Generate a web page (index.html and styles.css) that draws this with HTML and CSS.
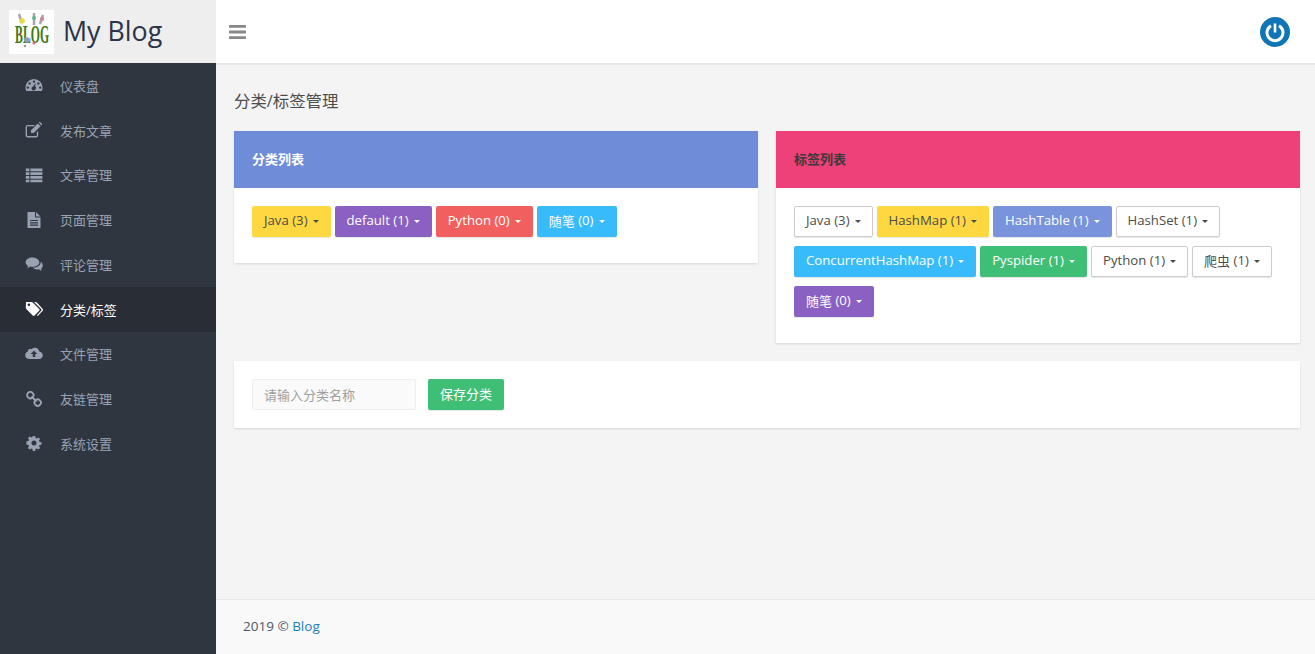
FILE: index.html
```html
<!DOCTYPE html>
<html lang="zh-CN">
<head>
<meta charset="utf-8">
<title>My Blog</title>
<link rel="stylesheet" href="styles.css">
</head>
<body>
<div class="app">
  <aside class="sidebar">
    <div class="brand">
      <svg class="logo" viewBox="0 0 45 44">
        <rect width="45" height="44" fill="#fff"/>
        <path d="M10 4l3 9M25 3v12M34 5l-3 9" stroke="#a5a5b0" stroke-width="2.500" fill="none"/>
        <circle cx="13" cy="11" r="2.800" fill="#e8dc4a"/><circle cx="25" cy="8" r="2" fill="#5fb98a"/><circle cx="33" cy="9" r="2.200" fill="#c98a9a"/>
        <g transform="scale(.47 1)"><text class="logo-text" x="13" y="33">BLOG</text></g>
        <circle cx="18" cy="30" r="2.800" fill="#8aa0c8"/><circle cx="25" cy="33" r="1.600" fill="#d77"/><circle cx="11" cy="24" r="1.100" fill="#e33"/><circle cx="16" cy="36" r="1.300" fill="#a99"/>
      </svg>
      <span class="brand-name">My Blog</span>
    </div>
    <nav class="menu">
      <a class="item"><svg class="ico" viewBox="0 0 18 16"><path fill-rule="evenodd" d="M9 2a8.600 8.600 0 0 1 8.600 8.600c0 1.300-.3 2.400-.8 3.400H1.200a8 8 0 0 1-.8-3.400A8.600 8.600 0 0 1 9 2zM9 3.400a1.200 1.200 0 1 0 0 2.400 1.200 1.200 0 0 0 0-2.400zM4.600 5.200a1.200 1.200 0 1 0 0 2.400 1.200 1.200 0 0 0 0-2.400zM13.400 5.200a1.200 1.200 0 1 0 0 2.400 1.200 1.200 0 0 0 0-2.400zM2.800 9.400a1.200 1.200 0 1 0 0 2.400 1.200 1.200 0 0 0 0-2.400zM15.200 9.400a1.200 1.200 0 1 0 0 2.400 1.200 1.200 0 0 0 0-2.400zM10.800 6 8.100 9.500a2 2 0 1 0 2 3.200 2 2 0 0 0 .1-3.100z"/></svg><span>仪表盘</span></a>
      <a class="item"><svg class="ico" viewBox="0 0 18 16"><path d="M11.800 13.300v-3l1.400-1.400v4.400a2.200 2.200 0 0 1-2.200 2.200H2.800a2.200 2.200 0 0 1-2.200-2.200V5.100a2.200 2.200 0 0 1 2.200-2.200h7.400L8.800 4.300h-6a.8.800 0 0 0-.8.800v8.200c0 .4.400.8.800.8H11a.8.800 0 0 0 .8-.8zM6 8.200 12.800 1.400l2.800 2.800L8.800 11H6zM13.700.6l.5-.4a.800.800 0 0 1 1.100 0l1.600 1.600a.800.800 0 0 1 0 1.100l-.5.500z"/></svg><span>发布文章</span></a>
      <a class="item"><svg class="ico" viewBox="0 0 18 16"><path d="M.8 1.400h3.600v2.800H.8zM5.400 1.400h12v2.800h-12zM.8 5.200h3.600V8H.8zM5.400 5.200h12V8h-12zM.8 9h3.600v2.800H.8zM5.400 9h12v2.800h-12zM.8 12.800h3.600v2.400H.8zM5.400 12.800h12v2.400h-12z"/></svg><span>文章管理</span></a>
      <a class="item"><svg class="ico" viewBox="0 0 18 16"><path d="M10 0v5.500h5.500V16h-13V0zM11 0l4.500 4.500H11zM5 8v1.100h8V8zM5 10.300v1.100h8v-1.100zM5 12.600v1.100h8v-1.100z" fill-rule="evenodd"/></svg><span>页面管理</span></a>
      <a class="item"><svg class="ico" viewBox="0 0 18 16"><path d="M7.500 1.500C3.600 1.500.6 3.600.6 6.300c0 1.500.9 2.800 2.500 3.700-.2.800-.6 1.400-1.100 2 1.200-.2 2.300-.7 3.300-1.400.7.100 1.400.2 2.200.2 3.900 0 6.900-2.100 6.900-4.500S11.400 1.500 7.500 1.500zM15.800 5.800c.2 3.500-3.600 6.200-8.400 5.800 1.100 1.100 2.800 1.800 4.700 1.800.6 0 1.200-.1 1.800-.2.900.8 2 1.300 3.200 1.500-.4-.5-.9-1.200-1.100-2 1.100-.8 1.800-1.900 1.800-3.300 0-1.500-.9-2.800-2-3.600z"/></svg><span>评论管理</span></a>
      <a class="item active"><svg class="ico" viewBox="0 0 18 16"><path fill-rule="evenodd" d="M1 1h5.300c.5 0 1.100.2 1.400.6l6.500 6.400c.5.500.5 1.300 0 1.800l-4.700 4.700c-.5.500-1.300.5-1.800 0L1.300 8C1 7.600.8 7 .8 6.500zM3.900 2.500a1.300 1.300 0 1 0 0 2.600 1.300 1.300 0 0 0 0-2.600zM9 1h1.500c.5 0 1.100.2 1.400.6l5.800 6.400c.5.500.5 1.300 0 1.800l-4.500 4.700c-.5.500-1 .4-1.500 0l4.400-4.700c.5-.5.500-1.300 0-1.800z"/></svg><span>分类/标签</span></a>
      <a class="item"><svg class="ico" viewBox="0 0 18 16"><path fill-rule="evenodd" d="M10 1.800c2.200 0 3.900 1.500 4.300 3.600 2 .2 3.500 1.800 3.500 3.800 0 2.100-1.700 3.800-3.800 3.800H4.200C2 13 .2 11.300.2 9.200c0-1.700 1.100-3.200 2.700-3.700V5.200c0-1.300 1.100-2.400 2.500-2.400.5 0 1 .2 1.400.4C7.600 2.300 8.700 1.800 10 1.800zM9 4.800 5.700 8.100h2.100v3h2.400v-3h2.100z"/></svg><span>文件管理</span></a>
      <a class="item"><svg class="ico" viewBox="0 0 18 16"><g fill="none" stroke="currentColor" stroke-width="1.900"><rect x="2.200" y="1" width="6.200" height="6.200" rx="2.800" transform="rotate(45 5.300 4.100)"/><rect x="9.600" y="8.500" width="6.200" height="6.200" rx="2.800" transform="rotate(45 12.700 11.600)"/><path d="M6.500 5.500 11.500 10.500"/></g></svg><span>友链管理</span></a>
      <a class="item"><svg class="ico" viewBox="0 0 18 16"><path fill-rule="evenodd" d="M7.800 1h2.400l.4 2c.4.100.8.300 1.100.5l1.700-1.100 1.700 1.700-1.100 1.700c.2.300.4.700.5 1.100l2 .4v2.400l-2 .4c-.1.400-.3.800-.5 1.100l1.100 1.700-1.700 1.700-1.700-1.100c-.3.200-.7.400-1.100.5l-.4 2H7.800l-.4-2c-.4-.1-.8-.3-1.100-.5l-1.700 1.100-1.700-1.700 1.100-1.700c-.2-.3-.4-.7-.5-1.100l-2-.4V6.300l2-.4c.1-.4.300-.8.500-1.100L3 3.100l1.700-1.700 1.700 1.100c.3-.2.700-.4 1.100-.5zM9 5.500a2.500 2.500 0 1 0 0 5 2.500 2.500 0 0 0 0-5z"/></svg><span>系统设置</span></a>
    </nav>
  </aside>
  <div class="main">
    <header class="topbar">
      <svg class="bars" viewBox="0 0 1536 1792"><path d="M1536 1344v128q0 26-19 45t-45 19H64q-26 0-45-19t-19-45v-128q0-26 19-45t45-19h1408q26 0 45 19t19 45zm0-512v128q0 26-19 45t-45 19H64q-26 0-45-19t-19-45V832q0-26 19-45t45-19h1408q26 0 45 19t19 45zm0-512v128q0 26-19 45t-45 19H64q-26 0-45-19T0 448V320q0-26 19-45t45-19h1408q26 0 45 19t19 45z"/></svg>
      <svg class="power" viewBox="0 0 30 30"><circle cx="15" cy="15" r="15" fill="#0f75b5"/><path d="M11 8.700a8 8 0 1 0 8 0" fill="none" stroke="#fff" stroke-width="3"/><path d="M15 6.500v9" stroke="#fff" stroke-width="2.600"/></svg>
    </header>
    <main class="content">
      <h4 class="page-title">分类/标签管理</h4>
      <div class="cols">
        <section class="card">
          <h5 class="card-head head-blue">分类列表</h5>
          <div class="card-body">
            <a class="btn yellow">Java (3)<i class="caret"></i></a>
            <a class="btn purple">default (1)<i class="caret"></i></a>
            <a class="btn red">Python (0)<i class="caret"></i></a>
            <a class="btn sky"><span class="han">随笔</span> (0)<i class="caret"></i></a>
          </div>
        </section>
        <section class="card">
          <h5 class="card-head head-pink">标签列表</h5>
          <div class="card-body">
            <a class="btn plain">Java (3)<i class="caret"></i></a>
            <a class="btn yellow">HashMap (1)<i class="caret"></i></a>
            <a class="btn periwinkle">HashTable (1)<i class="caret"></i></a>
            <a class="btn plain">HashSet (1)<i class="caret"></i></a>
            <a class="btn sky">ConcurrentHashMap (1)<i class="caret"></i></a>
            <a class="btn green">Pyspider (1)<i class="caret"></i></a>
            <a class="btn plain">Python (1)<i class="caret"></i></a>
            <a class="btn plain"><span class="han">爬虫</span> (1)<i class="caret"></i></a>
            <a class="btn purple"><span class="han">随笔</span> (0)<i class="caret"></i></a>
          </div>
        </section>
      </div>
      <section class="card form-card">
        <input class="field" type="text" placeholder="请输入分类名称">
        <a class="btn green save">保存分类</a>
      </section>
    </main>
    <footer class="footer"><span>2019 ©&nbsp;<a class="foot-link">Blog</a></span></footer>
  </div>
</div>
</body>
</html>
```
FILE: styles.css
```css
* { box-sizing: border-box; }
html, body { margin: 0; height: 100%; overflow: hidden; }
body {
  font-family: "Open Sans", "Noto Sans CJK SC", sans-serif;
  font-size: 14px;
  color: #4c5667;
  background: #f4f4f4;
}
.app { display: grid; grid-template-columns: 216px 1fr; height: 654px; }

.sidebar { background: #2f3640; display: flex; flex-direction: column; }
.brand {
  height: 63px;
  background: #eeeeee;
  display: flex;
  align-items: center;
  padding-left: 9px;
  gap: 9px;
}
.logo { width: 45px; height: 44px; display: block; }
.logo-text { font-family: "Liberation Serif", serif; font-weight: 700; font-size: 25px; fill: #3d7a10; }
.brand-name { font-size: 26.800px; color: #2b3448; line-height: 1; padding-bottom: 1px; }
.menu { display: flex; flex-direction: column; }
.item {
  height: 44.750px;
  display: flex;
  align-items: center;
  padding-left: 25px;
  font-size: 13px;
  color: #98a2b3;
}
.ico { width: 18px; height: 16px; fill: currentColor; margin-right: 17px; flex: none; }
.item.active { background: #292d35; color: #fff; }

.main { display: flex; flex-direction: column; min-width: 0; }
.topbar {
  height: 64px;
  background: #fff;
  border-bottom: 1px solid #e8e8e8;
  box-shadow: 0 1px 1px rgba(0,0,0,.04);
  display: flex;
  align-items: center;
  justify-content: space-between;
  padding: 0 25px 0 13px;
}
.bars { width: 17px; height: 20px; fill: #888; }
.power { width: 30px; height: 30px; }

.content { flex: 1; padding: 27px 15px 0 18px; }
.page-title { margin: 0 0 20px; font-size: 16.400px; font-weight: 400; line-height: 20px; color: #4c4c4c; }
.cols { display: grid; grid-template-columns: 1fr 1fr; gap: 18px; align-items: start; }
.card { background: #fff; box-shadow: 0 1px 2px rgba(0,0,0,.12); }
.card-head {
  margin: 0;
  height: 57px;
  padding: 0 18px 2px;
  display: flex;
  align-items: center;
  font-size: 13px;
  font-weight: 700;
}
.head-blue { background: #6e8cd7; color: #fff; }
.head-pink { background: #ee4079; color: #3a3a3a; }
.card-body { padding: 18px 18px 26px; display: flex; flex-wrap: wrap; gap: 9px 4px; }

.btn {
  height: 31px;
  padding: 0 11px 3px 11px;
  display: inline-flex;
  align-items: center;
  white-space: pre;
  font-size: 13.200px;
  border-radius: 2px;
  border: 1px solid transparent;
  color: #fff;
  box-shadow: 0 1px 1px rgba(0,0,0,.1);
}
.han { font-size: 13px; }
.caret {
  display: inline-block;
  margin: 3px 0 0 5px;
  border-top: 3px solid currentColor;
  border-left: 3px solid transparent;
  border-right: 3px solid transparent;
}
.yellow { background: #ffd740; color: #4c4c4c; }
.purple { background: #8a60c3; }
.red { background: #f25f5f; }
.sky { background: #38bbfb; }
.green { background: #3fbe76; }
.periwinkle { background: #7994dc; }
.plain { background: #fff; border-color: #ccc; color: #4c4c4c; }

.form-card { margin-top: 18px; height: 67px; padding: 18px; display: flex; gap: 12px; align-items: flex-start; }
.field {
  width: 164px;
  height: 31px;
  padding: 0 11px;
  background: #fafafa;
  border: 1px solid #eeeeee;
  border-radius: 2px;
  font: 13px "Open Sans", "Noto Sans CJK SC", sans-serif;
  outline: none;
}
.field::placeholder { color: #a0a0a0; opacity: 1; }
.save { padding: 0 11px 3px; font-size: 13px; }

.footer {
  height: 55px;
  padding: 0 0 3px 27px;
  display: flex;
  align-items: center;
  border-top: 1px solid #e8e8e8;
  background: #f9f9f9;
  font-size: 13.500px;
  color: #4c5667;
}
.foot-link { color: #1b7fc4; }
```
